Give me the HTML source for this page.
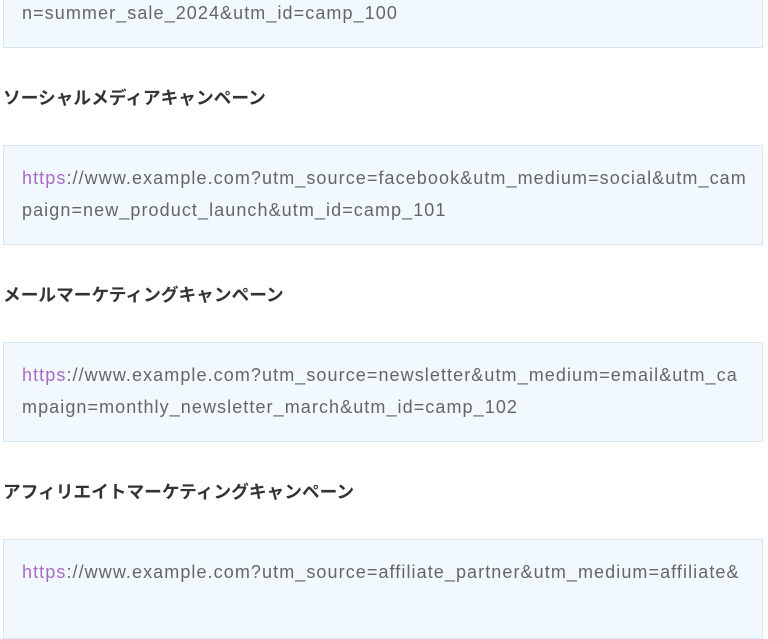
<!DOCTYPE html>
<html><head><meta charset="utf-8"><style>
body{margin:0;width:768px;height:577px;overflow:hidden;background:#fff;position:relative;font-family:"Liberation Sans","Noto Sans CJK JP",sans-serif}
.b{position:absolute;left:3px;width:760px;height:98px;background:#f1f8fe;border:1px solid #d6e6f2;box-sizing:border-box}
.t{position:absolute;left:22px;font-size:18px;color:#666;white-space:nowrap;letter-spacing:1.08px;line-height:32px}
.t span{color:#a86cc1}
h3{position:absolute;left:3px;margin:0;font-size:17.7px;font-weight:bold;color:#333;line-height:24px;font-family:"Noto Sans CJK JP",sans-serif}
</style></head><body>
<div class="b" style="top:-50px"></div>
<div class="t" style="top:-3px">n=summer_sale_2024&amp;utm_id=camp_100</div>
<h3 style="top:85px">ソーシャルメディアキャンペーン</h3>
<div class="b" style="top:145px;height:100px"></div>
<div class="t" style="top:162px"><span>https</span>://www.example.com?utm_source=facebook&amp;utm_medium=social&amp;utm_cam<br>paign=new_product_launch&amp;utm_id=camp_101</div>
<h3 style="top:282px">メールマーケティングキャンペーン</h3>
<div class="b" style="top:342px;height:100px"></div>
<div class="t" style="top:359px"><span>https</span>://www.example.com?utm_source=newsletter&amp;utm_medium=email&amp;utm_ca<br>mpaign=monthly_newsletter_march&amp;utm_id=camp_102</div>
<h3 style="top:479px">アフィリエイトマーケティングキャンペーン</h3>
<div class="b" style="top:539px;height:100px"></div>
<div class="t" style="top:556px"><span>https</span>://www.example.com?utm_source=affiliate_partner&amp;utm_medium=affiliate&amp;</div>
</body></html>
